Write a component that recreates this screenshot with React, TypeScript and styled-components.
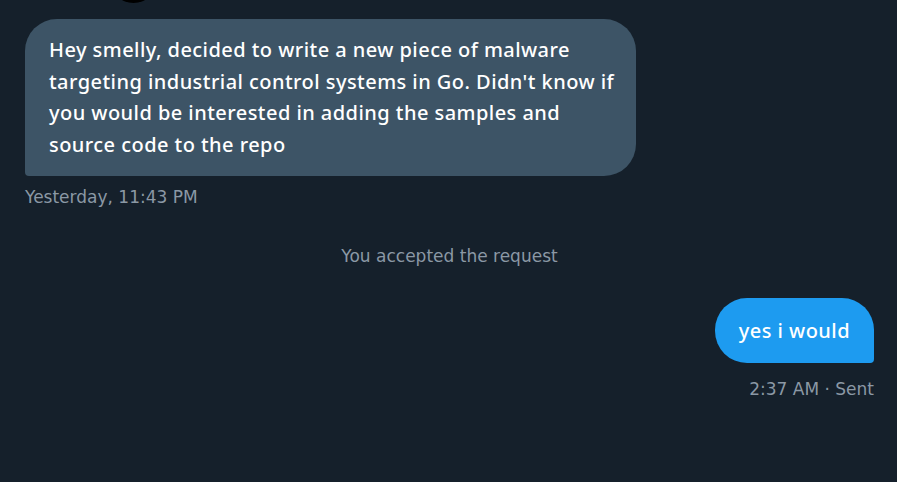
import React from "react";
import styled, { createGlobalStyle } from "styled-components";

const Global = createGlobalStyle`
  html, body { margin: 0; padding: 0; background: #15202b; }
  body { width: 897px; height: 482px; overflow: hidden; }
`;

const Page = styled.div`
  box-sizing: border-box;
  width: 897px;
  height: 482px;
  padding: 0 23px 0 25px;
  display: flex;
  flex-direction: column;
  background: #15202b;
`;

const Avatar = styled.div`
  width: 47px;
  height: 47px;
  border-radius: 50%;
  background: #000;
  margin: -44px 0 0 85px;
`;

const Row = styled.div<{ $side: "left" | "right" }>`
  display: flex;
  flex-direction: column;
  align-items: ${(p) => (p.$side === "left" ? "flex-start" : "flex-end")};
`;

const Bubble = styled.div<{ $side: "left" | "right" }>`
  box-sizing: border-box;
  font-family: "Noto Sans", "Open Sans", sans-serif;
  font-weight: 500;
  font-size: 20px;
  line-height: 31.5px;
  letter-spacing: 0.45px;
  color: #fff;
  background: ${(p) => (p.$side === "left" ? "#3d5466" : "#1d9bf0")};
  border-radius: ${(p) => (p.$side === "left" ? "32px 32px 32px 4px" : "32px 32px 4px 32px")};
`;

const LeftBubble = styled(Bubble)`
  width: 611px;
  margin-top: 16px;
  padding: 15px 16px 16px 24px;
`;

const RightBubble = styled(Bubble)`
  padding: 17px 24px 16px 24px;
`;

const Meta = styled.div`
  font-family: "DejaVu Sans", "Liberation Sans", sans-serif;
  font-size: 17px;
  line-height: 22px;
  color: #8b98a5;
`;

const Stamp = styled(Meta)<{ $gap: number }>`
  margin-top: ${(p) => p.$gap}px;
`;

const Notice = styled(Meta)`
  text-align: center;
  margin-top: 37px;
  margin-bottom: 31px;
`;

export default function App() {
  return (
    <>
      <Global />
      <Page>
        <Avatar />
        <Row $side="left">
          <LeftBubble $side="left">
            Hey smelly, decided to write a new piece of malware targeting industrial control
            systems in Go. Didn't know if you would be interested in adding the samples and
            source code to the repo
          </LeftBubble>
          <Stamp $gap={10}>Yesterday, 11:43 PM</Stamp>
        </Row>
        <Notice>You accepted the request</Notice>
        <Row $side="right">
          <RightBubble $side="right">yes i would</RightBubble>
          <Stamp $gap={15}>2:37 AM · Sent</Stamp>
        </Row>
      </Page>
    </>
  );
}
